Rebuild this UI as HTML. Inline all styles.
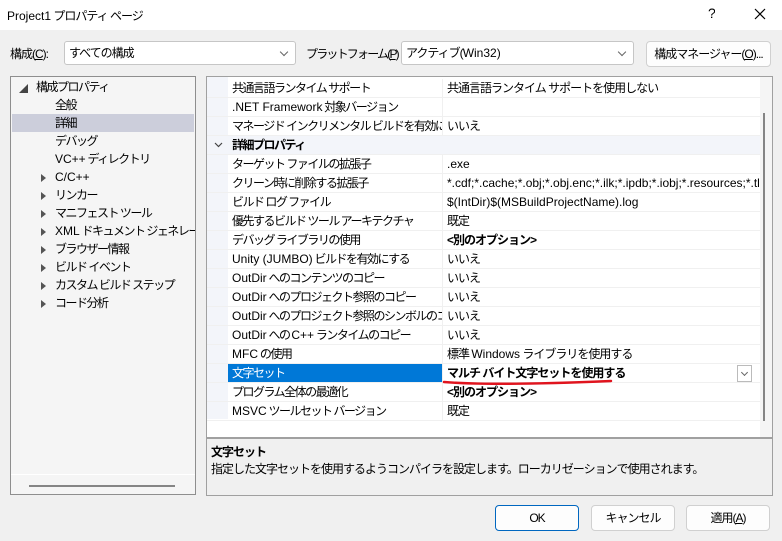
<!DOCTYPE html>
<html><head><meta charset="utf-8"><style>
*{box-sizing:border-box;margin:0;padding:0}
body{width:782px;height:541px;overflow:hidden;background:#f0f0f0;font-family:"Liberation Sans","Noto Sans CJK JP",sans-serif;font-size:12px;color:#000;position:relative;letter-spacing:-1px}
.a{position:absolute;white-space:nowrap;overflow:hidden}
.n{letter-spacing:0}
.title{left:0;top:0;width:782px;height:30px;background:#fff}
.combo{background:#fff;border:1px solid #c6c6c6;border-radius:3px;height:24px;line-height:22px;padding-left:4px}
.btn{background:#fdfdfd;border:1px solid #d0d0d0;border-radius:4px;height:26px;line-height:24px;text-align:center}
.chev{position:absolute;right:8px;top:7px;width:6px;height:6px;border-right:1px solid #666;border-bottom:1px solid #666;transform:rotate(45deg)}
.tree{left:10px;top:76px;width:186px;height:419px;background:#f5f5f5;border:1px solid #8e8e8e}
.ti{position:absolute;height:18px;line-height:18px}
.tri{position:absolute;width:0;height:0;border-top:4px solid transparent;border-bottom:4px solid transparent;border-left:5px solid #555}
.grid{left:206px;top:76px;width:567px;height:362px;background:#fff;border:1px solid #a0a0a0}
.row{position:absolute;left:0;width:553px;height:19px;line-height:18px;border-bottom:1px solid #f0f0f0}
.row .l{position:absolute;left:21px;width:215px;padding-left:4px;height:18px;overflow:hidden;border-right:1px solid #f0f0f0;letter-spacing:-1.5px}
.row .v{position:absolute;left:237px;padding-left:3px;width:316px;overflow:hidden}
.mg{position:absolute;left:0;top:0;width:21px;height:342px;background:#f3f5fa}
</style></head><body>
<div class="a title"></div>
<div class="a" style="left:7px;top:7px;font-size:12px"><span class="n">Project1</span> プロパティ ページ</div>
<div class="a" style="left:708px;top:5px;font-size:14px">?</div>
<svg class="a" style="left:754px;top:8px" width="12" height="12"><path d="M1 1L11 11M11 1L1 11" stroke="#000" stroke-width="1.2"/></svg>

<div class="a" style="left:10px;top:45px">構成(<u>C</u>):</div>
<div class="a combo" style="left:64px;top:41px;width:232px">すべての構成<span class="chev"></span></div>
<div class="a" style="left:306px;top:45px;letter-spacing:-1.8px">プラットフォーム(<u>P</u>):</div>
<div class="a combo" style="left:401px;top:41px;width:233px">アクティブ(<span class="n">Win32</span>)<span class="chev"></span></div>
<div class="a btn" style="left:646px;top:41px;width:125px">構成マネージャー(<u>O</u>)...</div>

<div class="a tree" style="letter-spacing:-1.5px">
<div class="ti" style="left:8px;top:2px"><span style="font-size:9px;color:#444">◢</span></div>
<div class="ti" style="left:25px;top:1px">構成プロパティ</div>
<div class="ti" style="left:44px;top:19px">全般</div>
<div class="ti" style="left:1px;top:37px;width:182px;background:#cccedb;padding-left:43px">詳細</div>
<div class="ti" style="left:44px;top:55px">デバッグ</div>
<div class="ti" style="left:44px;top:73px"><span class="n">VC++</span> ディレクトリ</div>
<div class="tri" style="left:30px;top:97px"></div><div class="ti n" style="left:44px;top:91px">C/C++</div>
<div class="tri" style="left:30px;top:115px"></div><div class="ti" style="left:44px;top:109px">リンカー</div>
<div class="tri" style="left:30px;top:133px"></div><div class="ti" style="left:44px;top:127px">マニフェスト ツール</div>
<div class="tri" style="left:30px;top:151px"></div><div class="ti" style="left:44px;top:145px"><span class="n">XML</span> ドキュメント ジェネレーター</div>
<div class="tri" style="left:30px;top:169px"></div><div class="ti" style="left:44px;top:163px">ブラウザー情報</div>
<div class="tri" style="left:30px;top:187px"></div><div class="ti" style="left:44px;top:181px">ビルド イベント</div>
<div class="tri" style="left:30px;top:205px"></div><div class="ti" style="left:44px;top:199px">カスタム ビルド ステップ</div>
<div class="tri" style="left:30px;top:223px"></div><div class="ti" style="left:44px;top:217px">コード分析</div>
<div style="position:absolute;left:0;top:397px;width:184px;height:1px;background:#fff"></div>
<div style="position:absolute;left:18px;top:408px;width:146px;height:2px;background:#858585"></div>
</div>

<div class="a grid">
<div class="mg"></div>
<div class="row" style="top:2px"><div class="l">共通言語ランタイム サポート</div><div class="v">共通言語ランタイム サポートを使用しない</div></div>
<div class="row" style="top:21px"><div class="l"><span class="n">.NET Framework</span> 対象バージョン</div><div class="v"></div></div>
<div class="row" style="top:40px"><div class="l">マネージド インクリメンタル ビルドを有効にする</div><div class="v">いいえ</div></div>
<div class="row" style="top:59px;background:#f3f5fa"><div class="l" style="font-weight:bold;border:none">詳細プロパティ</div><svg style="position:absolute;left:7px;top:6px" width="9" height="6"><path d="M1 1L4.5 4.5L8 1" stroke="#444" fill="none" stroke-width="1.2"/></svg></div>
<div class="row" style="top:78px"><div class="l">ターゲット ファイルの拡張子</div><div class="v n">.exe</div></div>
<div class="row" style="top:97px"><div class="l">クリーン時に削除する拡張子</div><div class="v n">*.cdf;*.cache;*.obj;*.obj.enc;*.ilk;*.ipdb;*.iobj;*.resources;*.tlb</div></div>
<div class="row" style="top:116px"><div class="l">ビルド ログ ファイル</div><div class="v n">$(IntDir)$(MSBuildProjectName).log</div></div>
<div class="row" style="top:135px"><div class="l">優先するビルド ツール アーキテクチャ</div><div class="v">既定</div></div>
<div class="row" style="top:154px"><div class="l">デバッグ ライブラリの使用</div><div class="v" style="font-weight:bold">&lt;別のオプション&gt;</div></div>
<div class="row" style="top:173px"><div class="l"><span class="n">Unity (JUMBO)</span> ビルドを有効にする</div><div class="v">いいえ</div></div>
<div class="row" style="top:192px"><div class="l"><span class="n">OutDir</span> へのコンテンツのコピー</div><div class="v">いいえ</div></div>
<div class="row" style="top:211px"><div class="l"><span class="n">OutDir</span> へのプロジェクト参照のコピー</div><div class="v">いいえ</div></div>
<div class="row" style="top:230px"><div class="l"><span class="n">OutDir</span> へのプロジェクト参照のシンボルのコピー</div><div class="v">いいえ</div></div>
<div class="row" style="top:249px"><div class="l"><span class="n">OutDir</span> への <span class="n">C++</span> ランタイムのコピー</div><div class="v">いいえ</div></div>
<div class="row" style="top:268px"><div class="l"><span class="n">MFC</span> の使用</div><div class="v">標準 <span class="n">Windows</span> ライブラリを使用する</div></div>
<div class="row" style="top:287px"><div class="l" style="background:#0078d7;color:#fff">文字セット</div><div class="v" style="font-weight:bold">マルチ バイト文字セットを使用する</div>
<div style="position:absolute;left:530px;top:1px;width:15px;height:17px;border:1px solid #bbb;background:#fff"><span class="chev" style="right:4px;top:4px;width:5px;height:5px"></span></div></div>
<div class="row" style="top:306px"><div class="l">プログラム全体の最適化</div><div class="v" style="font-weight:bold">&lt;別のオプション&gt;</div></div>
<div class="row" style="top:325px"><div class="l"><span class="n">MSVC</span> ツールセット バージョン</div><div class="v">既定</div></div>
<div style="position:absolute;left:553px;top:0;width:12px;height:360px;background:#f5f5f5"></div>
<div style="position:absolute;left:556px;top:36px;width:2px;height:308px;background:#858585"></div>
</div>
<svg class="a" style="left:440px;top:376px" width="175" height="14"><path d="M4 6 C40 9 100 8 171 5" stroke="#e0141e" stroke-width="2.5" fill="none" stroke-linecap="round"/></svg>

<div class="a" style="left:206px;top:438px;width:567px;height:58px;border:1px solid #a0a0a0;background:#f0f0f0">
<div class="a" style="left:4px;top:4px;font-weight:bold">文字セット</div>
<div class="a" style="left:4px;top:21px">指定した文字セットを使用するようコンパイラを設定します。ローカリゼーションで使用されます。</div>
</div>

<div class="a btn" style="left:495px;top:505px;width:84px;border:1px solid #0067c0;border-radius:4px">OK</div>
<div class="a btn" style="left:591px;top:505px;width:84px">キャンセル</div>
<div class="a btn" style="left:686px;top:505px;width:84px">適用(<u>A</u>)</div>
</body></html>
